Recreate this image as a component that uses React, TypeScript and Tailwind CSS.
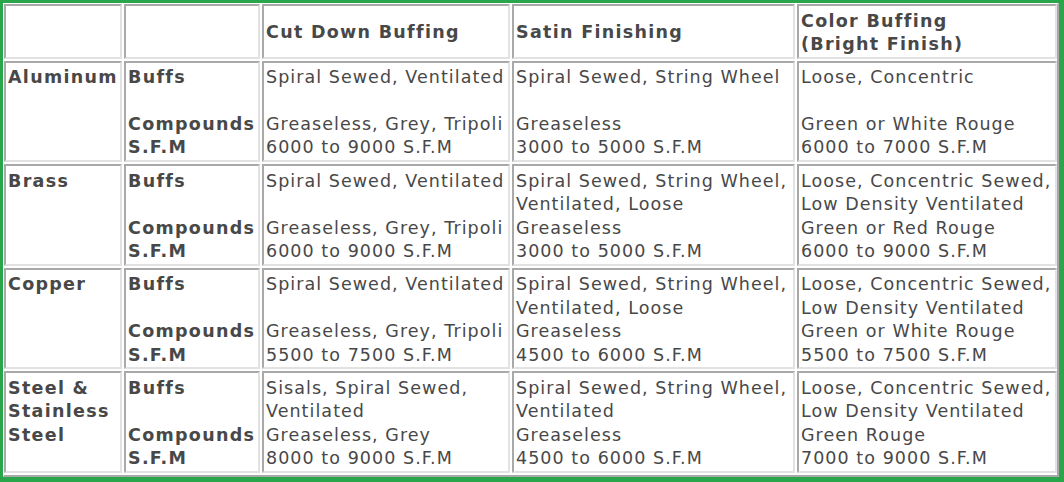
type Row = {
  metal: string[];
  cut: string[];
  satin: string[];
  color: string[];
};

const rows: Row[] = [
  {
    metal: ['Aluminum'],
    cut: ['Spiral Sewed, Ventilated', '', 'Greaseless, Grey, Tripoli', '6000 to 9000 S.F.M'],
    satin: ['Spiral Sewed, String Wheel', '', 'Greaseless', '3000 to 5000 S.F.M'],
    color: ['Loose, Concentric', '', 'Green or White Rouge', '6000 to 7000 S.F.M'],
  },
  {
    metal: ['Brass'],
    cut: ['Spiral Sewed, Ventilated', '', 'Greaseless, Grey, Tripoli', '6000 to 9000 S.F.M'],
    satin: ['Spiral Sewed, String Wheel,', 'Ventilated, Loose', 'Greaseless', '3000 to 5000 S.F.M'],
    color: ['Loose, Concentric Sewed,', 'Low Density Ventilated', 'Green or Red Rouge', '6000 to 9000 S.F.M'],
  },
  {
    metal: ['Copper'],
    cut: ['Spiral Sewed, Ventilated', '', 'Greaseless, Grey, Tripoli', '5500 to 7500 S.F.M'],
    satin: ['Spiral Sewed, String Wheel,', 'Ventilated, Loose', 'Greaseless', '4500 to 6000 S.F.M'],
    color: ['Loose, Concentric Sewed,', 'Low Density Ventilated', 'Green or White Rouge', '5500 to 7500 S.F.M'],
  },
  {
    metal: ['Steel &', 'Stainless', 'Steel'],
    cut: ['Sisals, Spiral Sewed,', 'Ventilated', 'Greaseless, Grey', '8000 to 9000 S.F.M'],
    satin: ['Spiral Sewed, String Wheel,', 'Ventilated', 'Greaseless', '4500 to 6000 S.F.M'],
    color: ['Loose, Concentric Sewed,', 'Low Density Ventilated', 'Green Rouge', '7000 to 9000 S.F.M'],
  },
];

const labels = ['Buffs', '', 'Compounds', 'S.F.M'];

// inset look, like an old border="1" table
const cell =
  'border-2 border-t-[#a9a9a9] border-l-[#a9a9a9] border-b-[#e2e2e2] border-r-[#e2e2e2] px-[2px] pt-[3.5px] pb-[0.5px]';

function Lines({ lines, bold }: { lines: string[]; bold?: boolean }) {
  return (
    <>
      {lines.map((l, i) => (
        <div
          key={i}
          className={
            'h-[23.4px] whitespace-nowrap ' +
            (bold ? 'font-bold tracking-[1.3px]' : 'tracking-[1.05px]')
          }
        >
          {l || '\u00a0'}
        </div>
      ))}
    </>
  );
}

export default function App() {
  return (
    <div
      className="w-[1064px] h-[482px] bg-white border-solid border-[#2aa64a] border-t-[3px] border-l-[3px] border-r-[5px] border-b-[5px] text-[17.5px] leading-[23.4px] text-[#484848]"
      style={{ fontFamily: '"DejaVu Sans", Verdana, sans-serif' }}
    >
      <div className="h-full border-t border-l border-r-2 border-b-2 border-t-white border-l-white border-r-[#a9a9a9] border-b-[#a9a9a9]">
        <div className="grid grid-cols-[118px_136px_248px_283px_260px] gap-[2px]">
          {/* header */}
          <div className={cell} />
          <div className={cell} />
          <div className={cell + ' flex items-center'}>
            <Lines lines={['Cut Down Buffing']} bold />
          </div>
          <div className={cell + ' flex items-center'}>
            <Lines lines={['Satin Finishing']} bold />
          </div>
          <div className={cell}>
            <Lines lines={['Color Buffing', '(Bright Finish)']} bold />
          </div>

          {rows.map(r => (
            <div key={r.metal.join(' ')} className="contents">
              <div className={cell}>
                <Lines lines={r.metal} bold />
              </div>
              <div className={cell}>
                <Lines lines={labels} bold />
              </div>
              <div className={cell}>
                <Lines lines={r.cut} />
              </div>
              <div className={cell}>
                <Lines lines={r.satin} />
              </div>
              <div className={cell}>
                <Lines lines={r.color} />
              </div>
            </div>
          ))}
        </div>
      </div>
    </div>
  );
}
